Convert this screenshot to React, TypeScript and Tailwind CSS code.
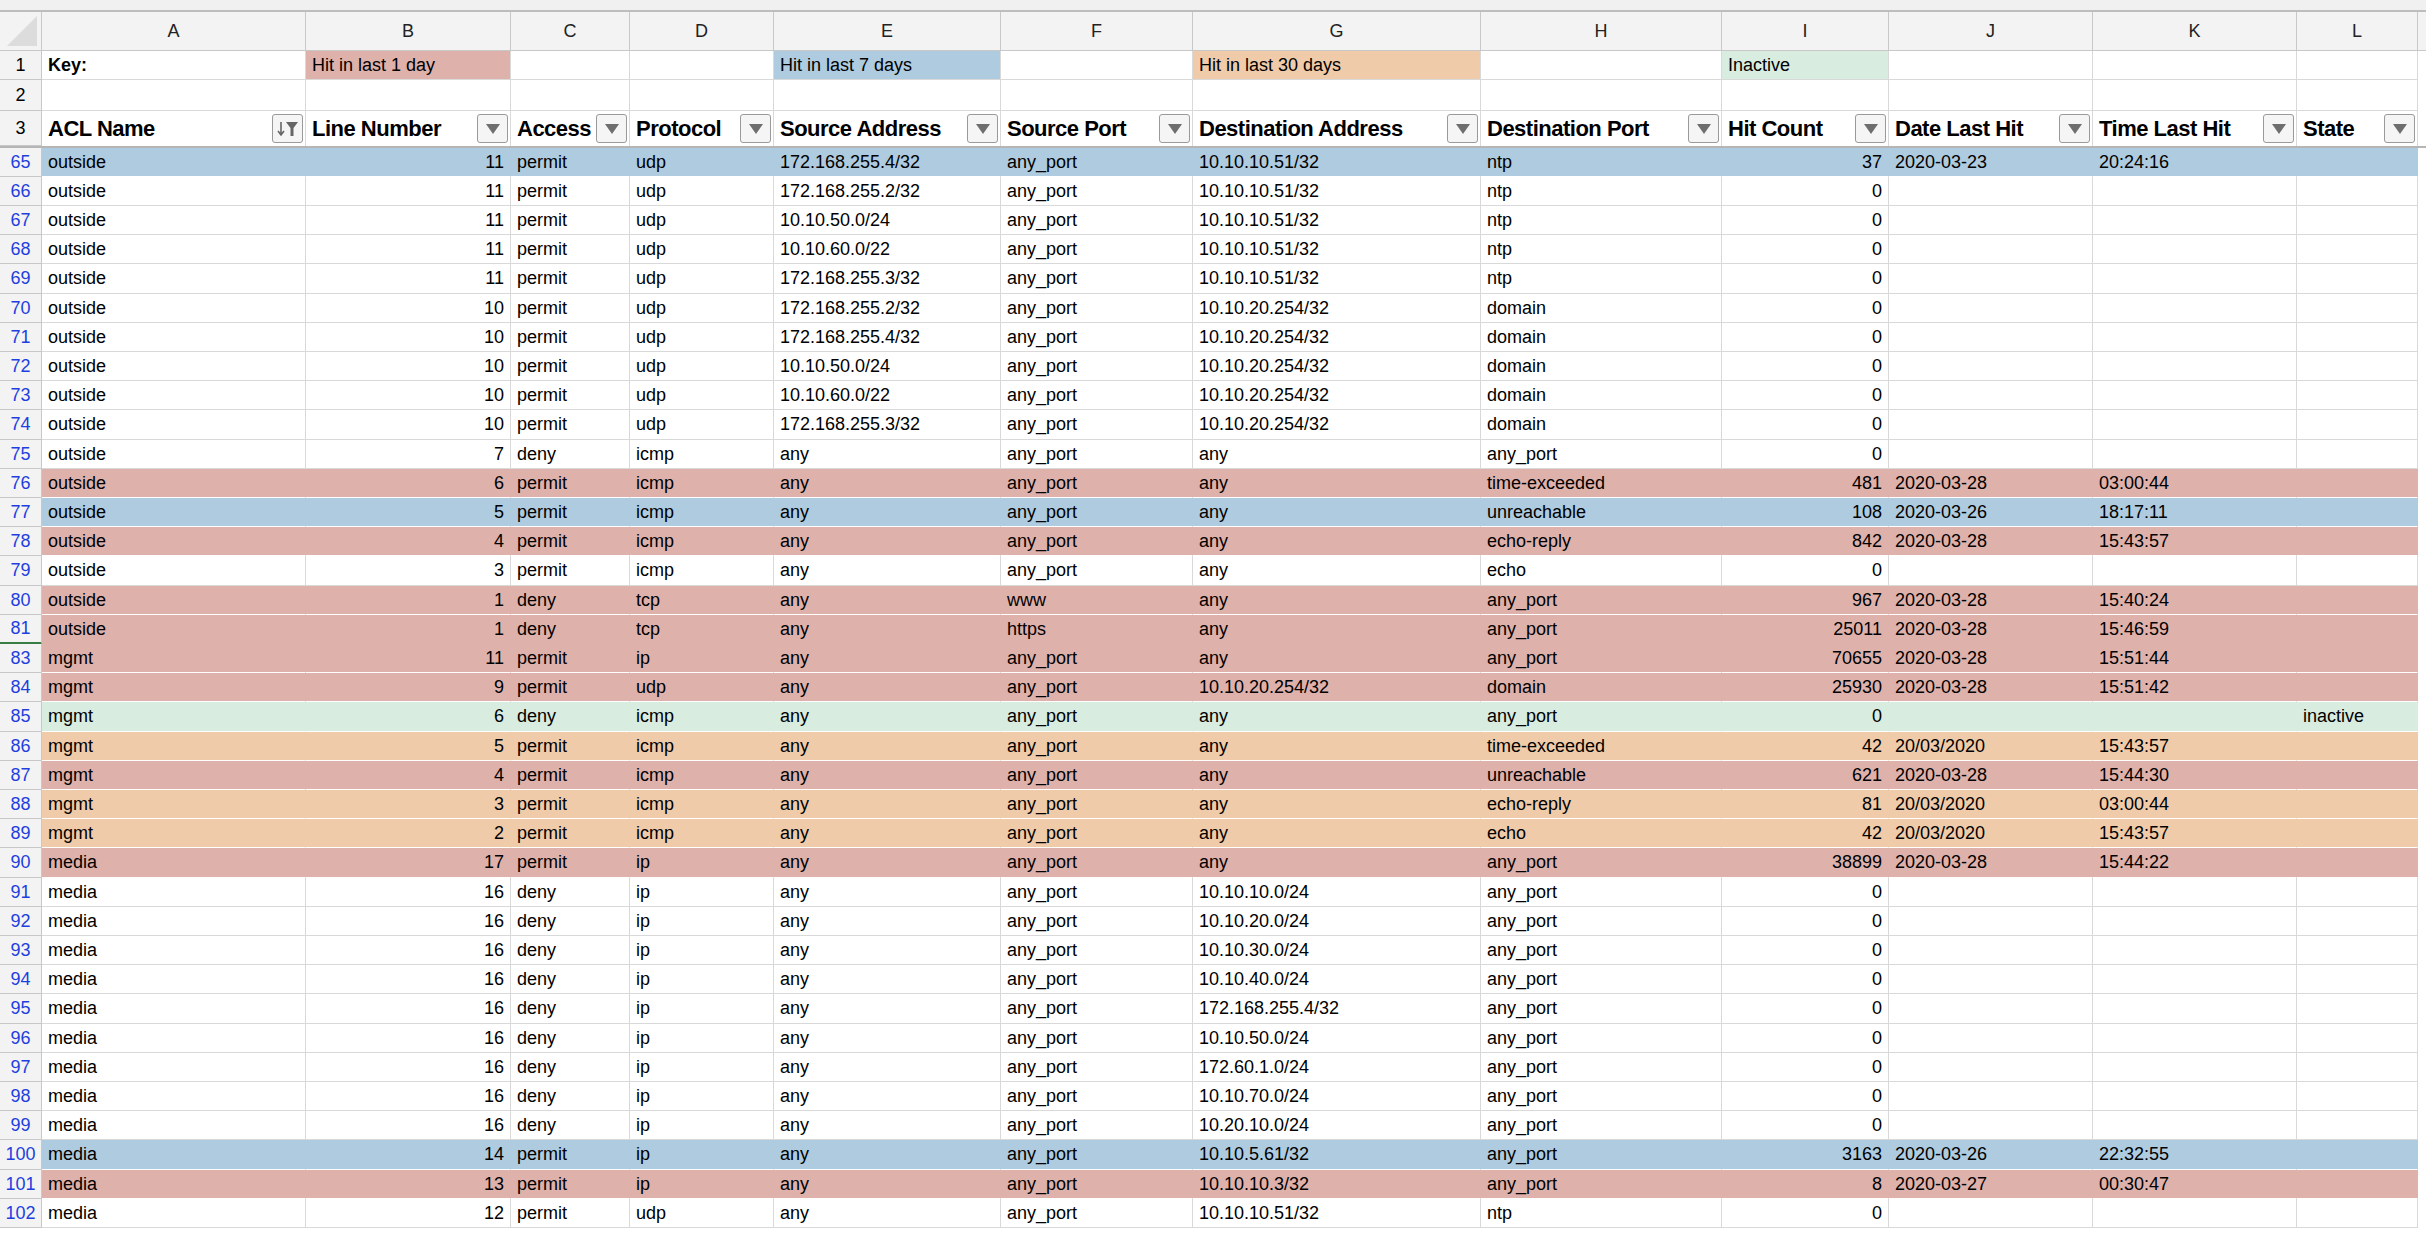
import React from 'react';

type Row = [number, string, string, string, string, string, string, string, string, string, string, string, string, string];

const R = 'bg-[#dfb1ab]';
const B = 'bg-[#afcbdf]';
const O = 'bg-[#f0cba9]';
const G = 'bg-[#d8ece0]';

const rows: Row[] = [
  [65, 'outside', '11', 'permit', 'udp', '172.168.255.4/32', 'any_port', '10.10.10.51/32', 'ntp', '37', '2020-03-23', '20:24:16', '', B],
  [66, 'outside', '11', 'permit', 'udp', '172.168.255.2/32', 'any_port', '10.10.10.51/32', 'ntp', '0', '', '', '', ''],
  [67, 'outside', '11', 'permit', 'udp', '10.10.50.0/24', 'any_port', '10.10.10.51/32', 'ntp', '0', '', '', '', ''],
  [68, 'outside', '11', 'permit', 'udp', '10.10.60.0/22', 'any_port', '10.10.10.51/32', 'ntp', '0', '', '', '', ''],
  [69, 'outside', '11', 'permit', 'udp', '172.168.255.3/32', 'any_port', '10.10.10.51/32', 'ntp', '0', '', '', '', ''],
  [70, 'outside', '10', 'permit', 'udp', '172.168.255.2/32', 'any_port', '10.10.20.254/32', 'domain', '0', '', '', '', ''],
  [71, 'outside', '10', 'permit', 'udp', '172.168.255.4/32', 'any_port', '10.10.20.254/32', 'domain', '0', '', '', '', ''],
  [72, 'outside', '10', 'permit', 'udp', '10.10.50.0/24', 'any_port', '10.10.20.254/32', 'domain', '0', '', '', '', ''],
  [73, 'outside', '10', 'permit', 'udp', '10.10.60.0/22', 'any_port', '10.10.20.254/32', 'domain', '0', '', '', '', ''],
  [74, 'outside', '10', 'permit', 'udp', '172.168.255.3/32', 'any_port', '10.10.20.254/32', 'domain', '0', '', '', '', ''],
  [75, 'outside', '7', 'deny', 'icmp', 'any', 'any_port', 'any', 'any_port', '0', '', '', '', ''],
  [76, 'outside', '6', 'permit', 'icmp', 'any', 'any_port', 'any', 'time-exceeded', '481', '2020-03-28', '03:00:44', '', R],
  [77, 'outside', '5', 'permit', 'icmp', 'any', 'any_port', 'any', 'unreachable', '108', '2020-03-26', '18:17:11', '', B],
  [78, 'outside', '4', 'permit', 'icmp', 'any', 'any_port', 'any', 'echo-reply', '842', '2020-03-28', '15:43:57', '', R],
  [79, 'outside', '3', 'permit', 'icmp', 'any', 'any_port', 'any', 'echo', '0', '', '', '', ''],
  [80, 'outside', '1', 'deny', 'tcp', 'any', 'www', 'any', 'any_port', '967', '2020-03-28', '15:40:24', '', R],
  [81, 'outside', '1', 'deny', 'tcp', 'any', 'https', 'any', 'any_port', '25011', '2020-03-28', '15:46:59', '', R],
  [83, 'mgmt', '11', 'permit', 'ip', 'any', 'any_port', 'any', 'any_port', '70655', '2020-03-28', '15:51:44', '', R],
  [84, 'mgmt', '9', 'permit', 'udp', 'any', 'any_port', '10.10.20.254/32', 'domain', '25930', '2020-03-28', '15:51:42', '', R],
  [85, 'mgmt', '6', 'deny', 'icmp', 'any', 'any_port', 'any', 'any_port', '0', '', '', 'inactive', G],
  [86, 'mgmt', '5', 'permit', 'icmp', 'any', 'any_port', 'any', 'time-exceeded', '42', '20/03/2020', '15:43:57', '', O],
  [87, 'mgmt', '4', 'permit', 'icmp', 'any', 'any_port', 'any', 'unreachable', '621', '2020-03-28', '15:44:30', '', R],
  [88, 'mgmt', '3', 'permit', 'icmp', 'any', 'any_port', 'any', 'echo-reply', '81', '20/03/2020', '03:00:44', '', O],
  [89, 'mgmt', '2', 'permit', 'icmp', 'any', 'any_port', 'any', 'echo', '42', '20/03/2020', '15:43:57', '', O],
  [90, 'media', '17', 'permit', 'ip', 'any', 'any_port', 'any', 'any_port', '38899', '2020-03-28', '15:44:22', '', R],
  [91, 'media', '16', 'deny', 'ip', 'any', 'any_port', '10.10.10.0/24', 'any_port', '0', '', '', '', ''],
  [92, 'media', '16', 'deny', 'ip', 'any', 'any_port', '10.10.20.0/24', 'any_port', '0', '', '', '', ''],
  [93, 'media', '16', 'deny', 'ip', 'any', 'any_port', '10.10.30.0/24', 'any_port', '0', '', '', '', ''],
  [94, 'media', '16', 'deny', 'ip', 'any', 'any_port', '10.10.40.0/24', 'any_port', '0', '', '', '', ''],
  [95, 'media', '16', 'deny', 'ip', 'any', 'any_port', '172.168.255.4/32', 'any_port', '0', '', '', '', ''],
  [96, 'media', '16', 'deny', 'ip', 'any', 'any_port', '10.10.50.0/24', 'any_port', '0', '', '', '', ''],
  [97, 'media', '16', 'deny', 'ip', 'any', 'any_port', '172.60.1.0/24', 'any_port', '0', '', '', '', ''],
  [98, 'media', '16', 'deny', 'ip', 'any', 'any_port', '10.10.70.0/24', 'any_port', '0', '', '', '', ''],
  [99, 'media', '16', 'deny', 'ip', 'any', 'any_port', '10.20.10.0/24', 'any_port', '0', '', '', '', ''],
  [100, 'media', '14', 'permit', 'ip', 'any', 'any_port', '10.10.5.61/32', 'any_port', '3163', '2020-03-26', '22:32:55', '', B],
  [101, 'media', '13', 'permit', 'ip', 'any', 'any_port', '10.10.10.3/32', 'any_port', '8', '2020-03-27', '00:30:47', '', R],
  [102, 'media', '12', 'permit', 'udp', 'any', 'any_port', '10.10.10.51/32', 'ntp', '0', '', '', '', ''],
];

const letters = ['A', 'B', 'C', 'D', 'E', 'F', 'G', 'H', 'I', 'J', 'K', 'L'];
const headers = ['ACL Name', 'Line Number', 'Access', 'Protocol', 'Source Address', 'Source Port', 'Destination Address', 'Destination Port', 'Hit Count', 'Date Last Hit', 'Time Last Hit', 'State'];
const rightCols = [1, 8];
const grid = 'grid grid-cols-[42px_264px_205px_119px_144px_227px_192px_288px_241px_167px_204px_204px_121px_1fr]';
const cell = 'border-r border-b border-[#d9d9d9] px-[6px] flex items-center whitespace-nowrap overflow-hidden';
const rowHead = 'border-r border-b border-[#c8c8c8] bg-[#f3f3f3] flex items-center justify-center';

function FilterBtn({ sorted }: { sorted?: boolean }) {
  return (
    <div className="w-[31px] h-[29px] border border-[#9a9a9a] rounded-[3px] bg-[#f5f5f5] flex items-center justify-center shrink-0">
      {sorted ? (
        <svg width="22" height="18" viewBox="0 0 22 18">
          <path d="M4 2v12M1 11l3 4 3-4" stroke="#666" strokeWidth="1.6" fill="none" />
          <path d="M9 2h12l-4.5 6v8h-3V8z" fill="#666" />
        </svg>
      ) : (
        <svg width="14" height="10" viewBox="0 0 14 10">
          <path d="M0 0h14L7 10z" fill="#6e6e6e" />
        </svg>
      )}
    </div>
  );
}

export default function App() {
  return (
    <div className="w-[2426px] h-[1236px] overflow-hidden bg-white text-[18px] text-black" style={{ fontFamily: '"Liberation Sans", Arial, sans-serif' }}>
      <div className="h-[12px] bg-[#f0f0f0] border-b-2 border-[#bdbdbd]" />
      {/* column letters */}
      <div className={`${grid} h-[39px] bg-[#f3f3f3] text-[18px] text-[#222]`}>
        <div className="border-r border-b border-[#c8c8c8] relative">
          <svg className="absolute right-1 bottom-1" width="30" height="30" viewBox="0 0 30 30"><path d="M30 0v30H0z" fill="#dcdcdc" /></svg>
        </div>
        {letters.map(l => (
          <div key={l} className="border-r border-b border-[#c8c8c8] flex items-center justify-center">{l}</div>
        ))}
        <div className="border-b border-[#c8c8c8]" />
      </div>
      {/* row 1 */}
      <div className={`${grid} h-[29px]`}>
        <div className={rowHead}>1</div>
        <div className={`${cell} font-bold`}>Key:</div>
        <div className={`${cell} ${R}`}>Hit in last 1 day</div>
        <div className={cell} />
        <div className={cell} />
        <div className={`${cell} ${B}`}>Hit in last 7 days</div>
        <div className={cell} />
        <div className={`${cell} ${O}`}>Hit in last 30 days</div>
        <div className={cell} />
        <div className={`${cell} ${G}`}>Inactive</div>
        <div className={cell} />
        <div className={cell} />
        <div className={cell} />
        <div />
      </div>
      {/* row 2 */}
      <div className={`${grid} h-[31px]`}>
        <div className={rowHead}>2</div>
        {letters.map(l => <div key={l} className={cell} />)}
        <div />
      </div>
      {/* row 3 headers */}
      <div className={`${grid} h-[37px] border-b-2 border-[#b5b5b5]`}>
        <div className={rowHead}>3</div>
        {headers.map((h, i) => (
          <div key={h} className="border-r border-[#d9d9d9] pl-[6px] pr-[2px] flex items-center justify-between whitespace-nowrap overflow-hidden font-bold text-[22px] tracking-[-0.5px]">
            <span>{h}</span>
            <FilterBtn sorted={i === 0} />
          </div>
        ))}
        <div />
      </div>
      {rows.map((r, idx) => {
        const [n, ...vals] = r;
        const color = r[13];
        return (
          <div key={n} className={`${grid} ${idx % 5 === 4 ? 'h-[30px]' : 'h-[29px]'} shrink-0`}>
            <div className={`${rowHead} text-[#1d3fe0] ${n === 81 ? 'border-b-[3px] border-b-[#3a7d44]' : ''}`}>{n}</div>
            {vals.slice(0, 12).map((v, i) => (
              <div key={i} className={`${cell} ${color} ${color ? 'border-r-transparent border-b-white' : ''} ${rightCols.includes(i) ? 'justify-end' : ''}`}>{v}</div>
            ))}
            <div />
          </div>
        );
      })}
    </div>
  );
}
